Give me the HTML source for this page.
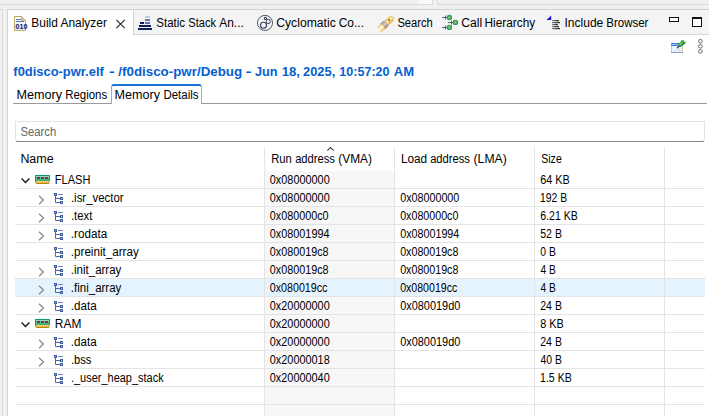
<!DOCTYPE html>
<html><head><meta charset="utf-8"><title>Build Analyzer</title>
<style>
html,body{margin:0;padding:0}
body{width:709px;height:416px;overflow:hidden;background:#f0f0f0;position:relative;font-family:"Liberation Sans",sans-serif;color:#1a1a1a}
.a{position:absolute;display:block}
.t{position:absolute;left:0;white-space:nowrap;transform-origin:0 50%;display:inline-block;color:#000}
.ttl{font-weight:bold;color:#0560d0}
.ph{color:#646464}
.gl{left:15px;width:690px;height:1px;background:#e4e4e4}
.cs{width:1px;background:#e4e4e4;top:147px;height:269px}
</style></head>
<body>
<!-- upper neighbouring panels -->
<div class="a" style="left:0;top:4px;width:433px;height:1px;background:#dadada"></div>
<div class="a" style="left:432px;top:0;width:1px;height:5px;background:#dadada"></div>
<div class="a" style="left:419px;top:0;width:13px;height:4px;background:#f9f9f9"></div>
<div class="a" style="left:437px;top:4px;width:272px;height:1px;background:#dadada"></div>
<div class="a" style="left:437px;top:0;width:1px;height:5px;background:#dadada"></div>
<!-- left neighbouring panel -->
<div class="a" style="left:0;top:9px;width:3px;height:1px;background:#dadada"></div>
<div class="a" style="left:2px;top:9px;width:1px;height:407px;background:#dadada"></div>
<!-- main view -->
<div class="a" style="left:7px;top:9px;width:702px;height:407px;background:#fff;border-left:1px solid #d2d2d2;border-top:1px solid #d2d2d2;box-sizing:border-box"></div>
<div class="a" style="left:134px;top:10px;width:575px;height:24px;background:#f4f4f4"></div>
<div class="a" style="left:133px;top:10px;width:1px;height:25px;background:#d6d6d6"></div>
<div class="a" style="left:133px;top:34px;width:576px;height:1px;background:#d6d6d6"></div>
<svg class="a" style="left:0;top:0" width="0" height="0"><defs><linearGradient id="gmb" x1="0" y1="0" x2="0" y2="1"><stop offset="0" stop-color="#7fd0a4"/><stop offset="1" stop-color="#3fae72"/></linearGradient>
<linearGradient id="gmt" x1="0" y1="0" x2="0" y2="1"><stop offset="0" stop-color="#ffffff"/><stop offset="1" stop-color="#ffd84a"/></linearGradient></defs></svg>
<!-- Build Analyzer icon -->
<svg class="a" style="left:13px;top:15px" width="16" height="17" viewBox="0 0 16 17">
<defs><linearGradient id="gdoc" x1="0" y1="0" x2="0" y2="1"><stop offset="0" stop-color="#ffffff"/><stop offset="1" stop-color="#e4ebf7"/></linearGradient></defs>
<path d="M1.5 1.5H8.5L12.5 5.5V15.5H1.5Z" fill="url(#gdoc)" stroke="#c2a868" stroke-width="1"/>
<path d="M8.5 1.5V5.5H12.5Z" fill="#e9c878" stroke="#c2a868" stroke-width="0.8"/>
<rect x="3" y="4" width="5" height="1" fill="#5a78b8"/>
<rect x="3" y="6" width="8" height="1" fill="#5a78b8"/>
<text x="2.5" y="14.1" font-family="Liberation Sans, sans-serif" font-weight="bold" font-size="7.4" fill="#0c1c58" textLength="11.9" lengthAdjust="spacingAndGlyphs">010</text>
</svg>
<!-- close X -->
<svg class="a" style="left:115px;top:19px" width="11" height="10" viewBox="0 0 11 10"><path d="M1.3 0.8L9.7 9.2M9.7 0.8L1.3 9.2" stroke="#1f1f1f" stroke-width="1.05" fill="none"/></svg>
<!-- Static Stack Analyzer icon -->
<svg class="a" style="left:137px;top:15px" width="16" height="16" viewBox="0 0 16 16">
<rect x="0" y="0.4" width="16" height="15.6" fill="#fff" opacity="0" />
<rect x="8" y="1" width="5" height="2" fill="#c3cce6"/>
<rect x="8" y="4" width="5" height="2" fill="#6379b4"/>
<rect x="4" y="4" width="1" height="2" fill="#dfe6f8"/>
<rect x="8" y="7" width="5" height="2" fill="#5a70ad"/>
<rect x="3" y="7" width="4" height="2" fill="#0d1f5c"/>
<rect x="2" y="10" width="12" height="2" fill="#0d1f5c"/>
<rect x="1" y="13" width="14" height="2" fill="#0d1f5c"/>
</svg>
<!-- Cyclomatic icon -->
<svg class="a" style="left:256px;top:14px" width="18" height="18" viewBox="0 0 18 18">
<circle cx="9" cy="8.9" r="7.55" fill="#f4f4f4" stroke="#414a66" stroke-width="0.9"/>
<circle cx="7.5" cy="11.3" r="3" fill="none" stroke="#343d5c" stroke-width="1.1"/>
<circle cx="12.2" cy="7.5" r="2.1" fill="none" stroke="#343d5c" stroke-width="1"/>
<circle cx="9.4" cy="4.4" r="1.15" fill="none" stroke="#343d5c" stroke-width="1.1"/>
</svg>
<!-- Search (flashlight) icon -->
<svg class="a" style="left:376px;top:13px" width="20" height="20" viewBox="0 0 20 20">
<defs>
<linearGradient id="gfl" x1="0" y1="0" x2="0" y2="1"><stop offset="0" stop-color="#f2b440"/><stop offset="0.4" stop-color="#ffeeb0"/><stop offset="1" stop-color="#eba732"/></linearGradient>
<linearGradient id="gfh" x1="0" y1="0" x2="0" y2="1"><stop offset="0" stop-color="#f6c24e"/><stop offset="0.5" stop-color="#fffbe8"/><stop offset="1" stop-color="#f3b63c"/></linearGradient>
<linearGradient id="gfb" x1="0" y1="0" x2="0" y2="1"><stop offset="0" stop-color="#a09488"/><stop offset="0.45" stop-color="#d2cfd8"/><stop offset="1" stop-color="#8e8072"/></linearGradient>
</defs>
<g transform="translate(10.2 10.4) rotate(-42) scale(0.88 0.95)">
<path d="M-10.6 -3.2L-3.5 -3.7V3.7L-10.6 3.2Q-11.4 0 -10.6 -3.2Z" fill="url(#gfh)"/>
<path d="M-4.6 -3.8Q-1.2 -3.6 0.4 -2.9V2.9Q-1.2 3.6 -4.6 3.8Q-3 0 -4.6 -3.8Z" fill="url(#gfb)" stroke="#9c8258" stroke-width="0.5"/>
<path d="M0.4 -2.9H7.6L10.6 -1.1V1.1L7.6 2.9H0.4Z" fill="url(#gfl)" stroke="#e5a534" stroke-width="0.5"/>
<circle cx="5" cy="-0.5" r="0.9" fill="#2446a6"/>
</g>
</svg>
<!-- Call Hierarchy icon -->
<svg class="a" style="left:440px;top:13px" width="20" height="18" viewBox="0 0 20 18">
<defs><radialGradient id="ggr" cx="0.5" cy="0.5" r="0.5"><stop offset="0" stop-color="#93d192"/><stop offset="0.5" stop-color="#52ae60"/><stop offset="1" stop-color="#2a8a42"/></radialGradient></defs>
<g stroke="#5b6280" stroke-width="1" fill="none">
<path d="M2 4.5H7M5.5 2.5V6.5"/><path d="M8 9.5H13M11.5 7.5V11.5"/><path d="M2 14.5H7M5.5 12.5V16.5"/>
</g>
<circle cx="9.4" cy="4.5" r="2.7" fill="url(#ggr)"/>
<circle cx="15.4" cy="9.4" r="2.7" fill="url(#ggr)"/>
<circle cx="9.4" cy="14.4" r="2.7" fill="url(#ggr)"/>
</svg>
<!-- Include Browser icon -->
<svg class="a" style="left:545px;top:14px" width="17" height="17" viewBox="0 0 17 17">
<defs><linearGradient id="gln" x1="0" y1="0" x2="1" y2="0"><stop offset="0" stop-color="#777"/><stop offset="0.6" stop-color="#111"/><stop offset="1" stop-color="#000"/></linearGradient></defs>
<path d="M1.6 6L6.2 6L6.2 1.6Z" fill="#1010d8"/>
<rect x="7" y="6.2" width="7" height="1" fill="url(#gln)"/>
<rect x="7" y="8.2" width="8" height="1" fill="url(#gln)"/>
<rect x="7" y="10.2" width="6" height="1" fill="url(#gln)"/>
<rect x="7" y="12.2" width="7" height="1" fill="url(#gln)"/>
<rect x="7" y="14.2" width="8" height="1" fill="url(#gln)"/>
</svg>
<!-- minimize / maximize -->
<div class="a" style="left:669px;top:17px;width:10px;height:5px;box-sizing:border-box;border:1px solid #111;background:#fdfdfd"></div>
<div class="a" style="left:692px;top:17px;width:10px;height:10px;box-sizing:border-box;border:1px solid #111;border-top-width:2px;background:#fdfdfd"></div>
<!-- pin -->
<svg class="a" style="left:670px;top:38px" width="17" height="17" viewBox="0 0 17 17">
<defs><linearGradient id="gpw" x1="0" y1="0" x2="0" y2="1"><stop offset="0" stop-color="#f4faff"/><stop offset="1" stop-color="#e2effc"/></linearGradient></defs>
<rect x="1.5" y="5.5" width="11" height="9" fill="url(#gpw)" stroke="#d9c99a" stroke-width="1"/>
<rect x="1" y="5" width="12" height="3" fill="#3c7cd4"/>
<rect x="1" y="6" width="12" height="1" fill="#9cc0ee"/>
<rect x="1" y="14" width="12" height="1" fill="#8c9cc4"/>
<path d="M7.6 10.2L10.6 13.2" stroke="#a9cdf2" stroke-width="0.9"/>
<path d="M7.1 10L9 8.1" stroke="#14286e" stroke-width="1.3"/>
<path d="M8.7 8.4L12.2 4.9" stroke="#2c9a3c" stroke-width="3.1"/>
<path d="M12 5.3L14.1 3.2" stroke="#2c9a3c" stroke-width="4.5"/>
<path d="M9.6 6.9L13.6 2.9" stroke="#6cc45c" stroke-width="1.1"/>
<path d="M10.2 6.8L11.2 5.8" stroke="#c8b078" stroke-width="1.6"/>
<path d="M10.1 8.9L12.9 6.1M13.6 6.4L15.5 4.5" stroke="#1c7a2c" stroke-width="0.8"/>
</svg>
<!-- view menu -->
<svg class="a" style="left:697px;top:38px" width="8" height="17" viewBox="0 0 8 17">
<g fill="#fff" stroke="#555" stroke-width="0.85"><circle cx="3.4" cy="3.2" r="1.85"/><circle cx="3.4" cy="8.3" r="1.85"/><circle cx="3.4" cy="13.4" r="1.85"/></g>
</svg>

<!-- inner tab folder -->
<div class="a" style="left:13px;top:103px;width:99px;height:1px;background:#9a9a9a"></div>
<div class="a" style="left:201px;top:103px;width:506px;height:1px;background:#9a9a9a"></div>
<div class="a" style="left:111px;top:84px;width:91px;height:20px;box-sizing:border-box;border:1px solid #a8a8a8;border-bottom:none;border-top:2px solid #1a73d2;border-radius:3px 3px 0 0;background:#fff"></div>
<!-- search box -->
<div class="a" style="left:15px;top:121px;width:690px;height:21px;box-sizing:border-box;border:1px solid #e3e3e3;border-bottom:1px solid #868686;border-radius:1px 1px 3px 3px;background:#fff"></div>
<!-- table -->
<div class="a" style="left:265px;top:171px;width:129px;height:245px;background:#f7f7f7"></div>
<div class="a" style="left:15px;top:279px;width:690px;height:17px;background:#e5f3ff"></div>
<div class="a gl" style="top:188px"></div>
<div class="a gl" style="top:206px"></div>
<div class="a gl" style="top:224px"></div>
<div class="a gl" style="top:242px"></div>
<div class="a gl" style="top:260px"></div>
<div class="a gl" style="top:278px"></div>
<div class="a gl" style="top:296px"></div>
<div class="a gl" style="top:314px"></div>
<div class="a gl" style="top:332px"></div>
<div class="a gl" style="top:350px"></div>
<div class="a gl" style="top:368px"></div>
<div class="a gl" style="top:386px"></div>
<div class="a gl" style="top:404px"></div>
<div class="a cs" style="left:264px"></div><div class="a cs" style="left:394px"></div><div class="a cs" style="left:534px"></div><div class="a cs" style="left:664px"></div>
<svg class="a" style="left:325px;top:146px" width="11" height="6" viewBox="0 0 11 6"><path d="M2.3 4.7L5.5 1.5L8.7 4.7" fill="none" stroke="#444" stroke-width="1.1"/></svg>
<svg class="a" style="left:20px;top:177px" width="11" height="7" viewBox="0 0 11 7"><path d="M1.6 1.5L5.5 5.4L9.4 1.5" fill="none" stroke="#1a1a1a" stroke-width="1.45"/></svg>
<svg class="a" style="left:35px;top:175px" width="15" height="10" viewBox="0 0 15 10">
<rect x="0" y="6" width="15" height="2" fill="#c9980f"/><rect x="1" y="8" width="13" height="1" fill="#a87c10"/>
<rect x="1.6" y="6" width="1.1" height="2.2" fill="url(#gmt)"/><rect x="3.6" y="6" width="1.1" height="2.2" fill="url(#gmt)"/><rect x="5.6" y="6" width="1.1" height="2.2" fill="url(#gmt)"/><rect x="7.6" y="6" width="1.1" height="2.2" fill="url(#gmt)"/><rect x="9.6" y="6" width="1.1" height="2.2" fill="url(#gmt)"/><rect x="11.6" y="6" width="1.1" height="2.2" fill="url(#gmt)"/><rect x="13.6" y="6" width="1.1" height="2.2" fill="url(#gmt)"/>
<rect x="0" y="0" width="15" height="6" fill="url(#gmb)"/><path d="M0.5 6V0.5H14.5V6" fill="none" stroke="#0f9c62" stroke-width="1"/>
<rect x="1" y="1" width="13" height="0.8" fill="#b9e8cd" opacity="0.7"/>
<rect x="2" y="2" width="3" height="2" fill="#7a3458"/><rect x="6" y="2" width="3" height="2" fill="#7a3458"/><rect x="10" y="2" width="3" height="2" fill="#7a3458"/>
</svg>
<svg class="a" style="left:38px;top:194.5px" width="7" height="10" viewBox="0 0 7 10"><path d="M1 0.8L5.4 5L1 9.2" fill="none" stroke="#8a8a8a" stroke-width="1.3"/></svg>
<svg class="a" style="left:54px;top:193px" width="10" height="12" viewBox="0 0 10 12">
<path d="M1.5 3v6.5H6M1.5 5.5H6" fill="none" stroke="#4a66a2" stroke-width="1"/>
<path d="M4 1.5H9" stroke="#6f88bd" stroke-width="1"/>
<rect x="0.5" y="0.5" width="2" height="2" fill="#9fb2d8" stroke="#44609c"/>
<rect x="6.5" y="4.5" width="2" height="2" fill="#9fb2d8" stroke="#44609c"/>
<rect x="6.5" y="8.5" width="2" height="2" fill="#9fb2d8" stroke="#44609c"/>
</svg>
<svg class="a" style="left:38px;top:212.5px" width="7" height="10" viewBox="0 0 7 10"><path d="M1 0.8L5.4 5L1 9.2" fill="none" stroke="#8a8a8a" stroke-width="1.3"/></svg>
<svg class="a" style="left:54px;top:211px" width="10" height="12" viewBox="0 0 10 12">
<path d="M1.5 3v6.5H6M1.5 5.5H6" fill="none" stroke="#4a66a2" stroke-width="1"/>
<path d="M4 1.5H9" stroke="#6f88bd" stroke-width="1"/>
<rect x="0.5" y="0.5" width="2" height="2" fill="#9fb2d8" stroke="#44609c"/>
<rect x="6.5" y="4.5" width="2" height="2" fill="#9fb2d8" stroke="#44609c"/>
<rect x="6.5" y="8.5" width="2" height="2" fill="#9fb2d8" stroke="#44609c"/>
</svg>
<svg class="a" style="left:38px;top:230.5px" width="7" height="10" viewBox="0 0 7 10"><path d="M1 0.8L5.4 5L1 9.2" fill="none" stroke="#8a8a8a" stroke-width="1.3"/></svg>
<svg class="a" style="left:54px;top:229px" width="10" height="12" viewBox="0 0 10 12">
<path d="M1.5 3v6.5H6M1.5 5.5H6" fill="none" stroke="#4a66a2" stroke-width="1"/>
<path d="M4 1.5H9" stroke="#6f88bd" stroke-width="1"/>
<rect x="0.5" y="0.5" width="2" height="2" fill="#9fb2d8" stroke="#44609c"/>
<rect x="6.5" y="4.5" width="2" height="2" fill="#9fb2d8" stroke="#44609c"/>
<rect x="6.5" y="8.5" width="2" height="2" fill="#9fb2d8" stroke="#44609c"/>
</svg>
<svg class="a" style="left:54px;top:247px" width="10" height="12" viewBox="0 0 10 12">
<path d="M1.5 3v6.5H6M1.5 5.5H6" fill="none" stroke="#4a66a2" stroke-width="1"/>
<path d="M4 1.5H9" stroke="#6f88bd" stroke-width="1"/>
<rect x="0.5" y="0.5" width="2" height="2" fill="#9fb2d8" stroke="#44609c"/>
<rect x="6.5" y="4.5" width="2" height="2" fill="#9fb2d8" stroke="#44609c"/>
<rect x="6.5" y="8.5" width="2" height="2" fill="#9fb2d8" stroke="#44609c"/>
</svg>
<svg class="a" style="left:38px;top:266.5px" width="7" height="10" viewBox="0 0 7 10"><path d="M1 0.8L5.4 5L1 9.2" fill="none" stroke="#8a8a8a" stroke-width="1.3"/></svg>
<svg class="a" style="left:54px;top:265px" width="10" height="12" viewBox="0 0 10 12">
<path d="M1.5 3v6.5H6M1.5 5.5H6" fill="none" stroke="#4a66a2" stroke-width="1"/>
<path d="M4 1.5H9" stroke="#6f88bd" stroke-width="1"/>
<rect x="0.5" y="0.5" width="2" height="2" fill="#9fb2d8" stroke="#44609c"/>
<rect x="6.5" y="4.5" width="2" height="2" fill="#9fb2d8" stroke="#44609c"/>
<rect x="6.5" y="8.5" width="2" height="2" fill="#9fb2d8" stroke="#44609c"/>
</svg>
<svg class="a" style="left:38px;top:284.5px" width="7" height="10" viewBox="0 0 7 10"><path d="M1 0.8L5.4 5L1 9.2" fill="none" stroke="#8a8a8a" stroke-width="1.3"/></svg>
<svg class="a" style="left:54px;top:283px" width="10" height="12" viewBox="0 0 10 12">
<path d="M1.5 3v6.5H6M1.5 5.5H6" fill="none" stroke="#4a66a2" stroke-width="1"/>
<path d="M4 1.5H9" stroke="#6f88bd" stroke-width="1"/>
<rect x="0.5" y="0.5" width="2" height="2" fill="#9fb2d8" stroke="#44609c"/>
<rect x="6.5" y="4.5" width="2" height="2" fill="#9fb2d8" stroke="#44609c"/>
<rect x="6.5" y="8.5" width="2" height="2" fill="#9fb2d8" stroke="#44609c"/>
</svg>
<svg class="a" style="left:38px;top:302.5px" width="7" height="10" viewBox="0 0 7 10"><path d="M1 0.8L5.4 5L1 9.2" fill="none" stroke="#8a8a8a" stroke-width="1.3"/></svg>
<svg class="a" style="left:54px;top:301px" width="10" height="12" viewBox="0 0 10 12">
<path d="M1.5 3v6.5H6M1.5 5.5H6" fill="none" stroke="#4a66a2" stroke-width="1"/>
<path d="M4 1.5H9" stroke="#6f88bd" stroke-width="1"/>
<rect x="0.5" y="0.5" width="2" height="2" fill="#9fb2d8" stroke="#44609c"/>
<rect x="6.5" y="4.5" width="2" height="2" fill="#9fb2d8" stroke="#44609c"/>
<rect x="6.5" y="8.5" width="2" height="2" fill="#9fb2d8" stroke="#44609c"/>
</svg>
<svg class="a" style="left:20px;top:321px" width="11" height="7" viewBox="0 0 11 7"><path d="M1.6 1.5L5.5 5.4L9.4 1.5" fill="none" stroke="#1a1a1a" stroke-width="1.45"/></svg>
<svg class="a" style="left:35px;top:319px" width="15" height="10" viewBox="0 0 15 10">
<rect x="0" y="6" width="15" height="2" fill="#c9980f"/><rect x="1" y="8" width="13" height="1" fill="#a87c10"/>
<rect x="1.6" y="6" width="1.1" height="2.2" fill="url(#gmt)"/><rect x="3.6" y="6" width="1.1" height="2.2" fill="url(#gmt)"/><rect x="5.6" y="6" width="1.1" height="2.2" fill="url(#gmt)"/><rect x="7.6" y="6" width="1.1" height="2.2" fill="url(#gmt)"/><rect x="9.6" y="6" width="1.1" height="2.2" fill="url(#gmt)"/><rect x="11.6" y="6" width="1.1" height="2.2" fill="url(#gmt)"/><rect x="13.6" y="6" width="1.1" height="2.2" fill="url(#gmt)"/>
<rect x="0" y="0" width="15" height="6" fill="url(#gmb)"/><path d="M0.5 6V0.5H14.5V6" fill="none" stroke="#0f9c62" stroke-width="1"/>
<rect x="1" y="1" width="13" height="0.8" fill="#b9e8cd" opacity="0.7"/>
<rect x="2" y="2" width="3" height="2" fill="#7a3458"/><rect x="6" y="2" width="3" height="2" fill="#7a3458"/><rect x="10" y="2" width="3" height="2" fill="#7a3458"/>
</svg>
<svg class="a" style="left:38px;top:338.5px" width="7" height="10" viewBox="0 0 7 10"><path d="M1 0.8L5.4 5L1 9.2" fill="none" stroke="#8a8a8a" stroke-width="1.3"/></svg>
<svg class="a" style="left:54px;top:337px" width="10" height="12" viewBox="0 0 10 12">
<path d="M1.5 3v6.5H6M1.5 5.5H6" fill="none" stroke="#4a66a2" stroke-width="1"/>
<path d="M4 1.5H9" stroke="#6f88bd" stroke-width="1"/>
<rect x="0.5" y="0.5" width="2" height="2" fill="#9fb2d8" stroke="#44609c"/>
<rect x="6.5" y="4.5" width="2" height="2" fill="#9fb2d8" stroke="#44609c"/>
<rect x="6.5" y="8.5" width="2" height="2" fill="#9fb2d8" stroke="#44609c"/>
</svg>
<svg class="a" style="left:38px;top:356.5px" width="7" height="10" viewBox="0 0 7 10"><path d="M1 0.8L5.4 5L1 9.2" fill="none" stroke="#8a8a8a" stroke-width="1.3"/></svg>
<svg class="a" style="left:54px;top:355px" width="10" height="12" viewBox="0 0 10 12">
<path d="M1.5 3v6.5H6M1.5 5.5H6" fill="none" stroke="#4a66a2" stroke-width="1"/>
<path d="M4 1.5H9" stroke="#6f88bd" stroke-width="1"/>
<rect x="0.5" y="0.5" width="2" height="2" fill="#9fb2d8" stroke="#44609c"/>
<rect x="6.5" y="4.5" width="2" height="2" fill="#9fb2d8" stroke="#44609c"/>
<rect x="6.5" y="8.5" width="2" height="2" fill="#9fb2d8" stroke="#44609c"/>
</svg>
<svg class="a" style="left:54px;top:373px" width="10" height="12" viewBox="0 0 10 12">
<path d="M1.5 3v6.5H6M1.5 5.5H6" fill="none" stroke="#4a66a2" stroke-width="1"/>
<path d="M4 1.5H9" stroke="#6f88bd" stroke-width="1"/>
<rect x="0.5" y="0.5" width="2" height="2" fill="#9fb2d8" stroke="#44609c"/>
<rect x="6.5" y="4.5" width="2" height="2" fill="#9fb2d8" stroke="#44609c"/>
<rect x="6.5" y="8.5" width="2" height="2" fill="#9fb2d8" stroke="#44609c"/>
</svg>
<span class="lb"><span class="t" style="top:17.42px;font-size:12.5px;line-height:12.5px;transform:translateX(31.30px) scaleX(0.9544);">Build Analyzer</span></span>
<span class="lb"><span class="t" style="top:17.42px;font-size:12.5px;line-height:12.5px;transform:translateX(156.25px) scaleX(0.9215);">Static</span> <span class="t" style="top:17.42px;font-size:12.5px;line-height:12.5px;transform:translateX(188.30px) scaleX(0.8837);">Stack</span> <span class="t" style="top:17.42px;font-size:12.5px;line-height:12.5px;transform:translateX(219.20px) scaleX(0.9573);">An...</span></span>
<span class="lb"><span class="t" style="top:17.42px;font-size:12.5px;line-height:12.5px;transform:translateX(276.25px) scaleX(0.9733);">Cyclomatic</span> <span class="t" style="top:17.42px;font-size:12.5px;line-height:12.5px;transform:translateX(338.70px) scaleX(0.9573);">Co...</span></span>
<span class="lb"><span class="t" style="top:17.42px;font-size:12.5px;line-height:12.5px;transform:translateX(397.40px) scaleX(0.8908);">Search</span></span>
<span class="lb"><span class="t" style="top:17.42px;font-size:12.5px;line-height:12.5px;transform:translateX(461.20px) scaleX(0.9750);">Call</span> <span class="t" style="top:17.42px;font-size:12.5px;line-height:12.5px;transform:translateX(484.60px) scaleX(0.9440);">Hierarchy</span></span>
<span class="lb"><span class="t" style="top:17.42px;font-size:12.5px;line-height:12.5px;transform:translateX(564.45px) scaleX(0.9635);">Include</span> <span class="t" style="top:17.42px;font-size:12.5px;line-height:12.5px;transform:translateX(606.30px) scaleX(0.9190);">Browser</span></span>
<span class="lb"><span class="t ttl" style="top:64.57px;font-size:13.5px;line-height:13.5px;transform:translateX(13.35px) scaleX(0.9568);">f0disco-pwr.elf</span> <span class="t ttl" style="top:64.57px;font-size:13.5px;line-height:13.5px;transform:translateX(109.00px) scaleX(1.2615);">-</span> <span class="t ttl" style="top:64.57px;font-size:13.5px;line-height:13.5px;transform:translateX(118.35px) scaleX(0.9882);">/f0disco-pwr/Debug</span> <span class="t ttl" style="top:64.57px;font-size:13.5px;line-height:13.5px;transform:translateX(245.50px) scaleX(1.3594);">-</span> <span class="t ttl" style="top:64.57px;font-size:13.5px;line-height:13.5px;transform:translateX(255.00px) scaleX(0.9395);">Jun</span> <span class="t ttl" style="top:64.57px;font-size:13.5px;line-height:13.5px;transform:translateX(281.70px) scaleX(0.9738);">18,</span> <span class="t ttl" style="top:64.57px;font-size:13.5px;line-height:13.5px;transform:translateX(303.00px) scaleX(0.9569);">2025,</span> <span class="t ttl" style="top:64.57px;font-size:13.5px;line-height:13.5px;transform:translateX(339.30px) scaleX(0.9295);">10:57:20</span> <span class="t ttl" style="top:64.57px;font-size:13.5px;line-height:13.5px;transform:translateX(393.85px) scaleX(0.9634);">AM</span></span>
<span class="lb"><span class="t" style="top:89.42px;font-size:12.5px;line-height:12.5px;transform:translateX(16.40px) scaleX(1.0087);">Memory</span> <span class="t" style="top:89.42px;font-size:12.5px;line-height:12.5px;transform:translateX(65.20px) scaleX(0.9148);">Regions</span></span>
<span class="lb"><span class="t" style="top:89.42px;font-size:12.5px;line-height:12.5px;transform:translateX(114.60px) scaleX(1.0071);">Memory</span> <span class="t" style="top:89.42px;font-size:12.5px;line-height:12.5px;transform:translateX(163.45px) scaleX(0.9164);">Details</span></span>
<span class="lb"><span class="t ph" style="top:126.42px;font-size:12.5px;line-height:12.5px;transform:translateX(20.40px) scaleX(0.9066);">Search</span></span>
<span class="lb"><span class="t" style="top:153.42px;font-size:12.5px;line-height:12.5px;transform:translateX(20.40px) scaleX(0.9940);">Name</span></span>
<span class="lb"><span class="t" style="top:153.42px;font-size:12.5px;line-height:12.5px;transform:translateX(271.20px) scaleX(0.9000);">Run</span> <span class="t" style="top:153.42px;font-size:12.5px;line-height:12.5px;transform:translateX(295.15px) scaleX(0.8920);">address</span> <span class="t" style="top:153.42px;font-size:12.5px;line-height:12.5px;transform:translateX(338.35px) scaleX(0.9502);">(VMA)</span></span>
<span class="lb"><span class="t" style="top:153.42px;font-size:12.5px;line-height:12.5px;transform:translateX(401.00px) scaleX(0.9383);">Load</span> <span class="t" style="top:153.42px;font-size:12.5px;line-height:12.5px;transform:translateX(430.15px) scaleX(0.8943);">address</span> <span class="t" style="top:153.42px;font-size:12.5px;line-height:12.5px;transform:translateX(473.55px) scaleX(0.9754);">(LMA)</span></span>
<span class="lb"><span class="t" style="top:153.42px;font-size:12.5px;line-height:12.5px;transform:translateX(541.20px) scaleX(0.8459);">Size</span></span>
<span class="lb"><span class="t" style="top:174.42px;font-size:12.5px;line-height:12.5px;transform:translateX(54.80px) scaleX(0.8830);">FLASH</span></span>
<span class="lb"><span class="t" style="top:174.42px;font-size:12.5px;line-height:12.5px;transform:translateX(269.80px) scaleX(0.8705);">0x08000000</span></span>
<span class="lb"><span class="t" style="top:174.42px;font-size:12.5px;line-height:12.5px;transform:translateX(540.25px) scaleX(0.8695);">64 KB</span></span>
<span class="lb"><span class="t" style="top:192.42px;font-size:12.5px;line-height:12.5px;transform:translateX(70.95px) scaleX(0.9133);">.isr_vector</span></span>
<span class="lb"><span class="t" style="top:192.42px;font-size:12.5px;line-height:12.5px;transform:translateX(269.80px) scaleX(0.8705);">0x08000000</span></span>
<span class="lb"><span class="t" style="top:192.42px;font-size:12.5px;line-height:12.5px;transform:translateX(400.15px) scaleX(0.8596);">0x08000000</span></span>
<span class="lb"><span class="t" style="top:192.42px;font-size:12.5px;line-height:12.5px;transform:translateX(540.00px) scaleX(0.8325);">192 B</span></span>
<span class="lb"><span class="t" style="top:210.42px;font-size:12.5px;line-height:12.5px;transform:translateX(70.95px) scaleX(0.9067);">.text</span></span>
<span class="lb"><span class="t" style="top:210.42px;font-size:12.5px;line-height:12.5px;transform:translateX(269.80px) scaleX(0.8628);">0x080000c0</span></span>
<span class="lb"><span class="t" style="top:210.42px;font-size:12.5px;line-height:12.5px;transform:translateX(400.15px) scaleX(0.8554);">0x080000c0</span></span>
<span class="lb"><span class="t" style="top:210.42px;font-size:12.5px;line-height:12.5px;transform:translateX(540.25px) scaleX(0.8423);">6.21 KB</span></span>
<span class="lb"><span class="t" style="top:228.42px;font-size:12.5px;line-height:12.5px;transform:translateX(70.85px) scaleX(0.9344);">.rodata</span></span>
<span class="lb"><span class="t" style="top:228.42px;font-size:12.5px;line-height:12.5px;transform:translateX(269.80px) scaleX(0.8669);">0x08001994</span></span>
<span class="lb"><span class="t" style="top:228.42px;font-size:12.5px;line-height:12.5px;transform:translateX(400.15px) scaleX(0.8596);">0x08001994</span></span>
<span class="lb"><span class="t" style="top:228.42px;font-size:12.5px;line-height:12.5px;transform:translateX(540.25px) scaleX(0.8427);">52 B</span></span>
<span class="lb"><span class="t" style="top:246.42px;font-size:12.5px;line-height:12.5px;transform:translateX(70.80px) scaleX(0.9314);">.preinit_array</span></span>
<span class="lb"><span class="t" style="top:246.42px;font-size:12.5px;line-height:12.5px;transform:translateX(269.80px) scaleX(0.8628);">0x080019c8</span></span>
<span class="lb"><span class="t" style="top:246.42px;font-size:12.5px;line-height:12.5px;transform:translateX(400.15px) scaleX(0.8554);">0x080019c8</span></span>
<span class="lb"><span class="t" style="top:246.42px;font-size:12.5px;line-height:12.5px;transform:translateX(540.25px) scaleX(0.8286);">0 B</span></span>
<span class="lb"><span class="t" style="top:264.42px;font-size:12.5px;line-height:12.5px;transform:translateX(70.85px) scaleX(0.9196);">.init_array</span></span>
<span class="lb"><span class="t" style="top:264.42px;font-size:12.5px;line-height:12.5px;transform:translateX(269.80px) scaleX(0.8628);">0x080019c8</span></span>
<span class="lb"><span class="t" style="top:264.42px;font-size:12.5px;line-height:12.5px;transform:translateX(400.15px) scaleX(0.8554);">0x080019c8</span></span>
<span class="lb"><span class="t" style="top:264.42px;font-size:12.5px;line-height:12.5px;transform:translateX(540.50px) scaleX(0.8156);">4 B</span></span>
<span class="lb"><span class="t" style="top:282.42px;font-size:12.5px;line-height:12.5px;transform:translateX(70.85px) scaleX(0.9196);">.fini_array</span></span>
<span class="lb"><span class="t" style="top:282.42px;font-size:12.5px;line-height:12.5px;transform:translateX(269.80px) scaleX(0.8550);">0x080019cc</span></span>
<span class="lb"><span class="t" style="top:282.42px;font-size:12.5px;line-height:12.5px;transform:translateX(400.15px) scaleX(0.8475);">0x080019cc</span></span>
<span class="lb"><span class="t" style="top:282.42px;font-size:12.5px;line-height:12.5px;transform:translateX(540.50px) scaleX(0.8156);">4 B</span></span>
<span class="lb"><span class="t" style="top:300.42px;font-size:12.5px;line-height:12.5px;transform:translateX(70.85px) scaleX(0.9300);">.data</span></span>
<span class="lb"><span class="t" style="top:300.42px;font-size:12.5px;line-height:12.5px;transform:translateX(269.80px) scaleX(0.8705);">0x20000000</span></span>
<span class="lb"><span class="t" style="top:300.42px;font-size:12.5px;line-height:12.5px;transform:translateX(400.15px) scaleX(0.8743);">0x080019d0</span></span>
<span class="lb"><span class="t" style="top:300.42px;font-size:12.5px;line-height:12.5px;transform:translateX(540.25px) scaleX(0.8427);">24 B</span></span>
<span class="lb"><span class="t" style="top:318.42px;font-size:12.5px;line-height:12.5px;transform:translateX(54.80px) scaleX(0.9561);">RAM</span></span>
<span class="lb"><span class="t" style="top:318.42px;font-size:12.5px;line-height:12.5px;transform:translateX(269.80px) scaleX(0.8705);">0x20000000</span></span>
<span class="lb"><span class="t" style="top:318.42px;font-size:12.5px;line-height:12.5px;transform:translateX(540.25px) scaleX(0.8710);">8 KB</span></span>
<span class="lb"><span class="t" style="top:336.42px;font-size:12.5px;line-height:12.5px;transform:translateX(70.85px) scaleX(0.9300);">.data</span></span>
<span class="lb"><span class="t" style="top:336.42px;font-size:12.5px;line-height:12.5px;transform:translateX(269.80px) scaleX(0.8705);">0x20000000</span></span>
<span class="lb"><span class="t" style="top:336.42px;font-size:12.5px;line-height:12.5px;transform:translateX(400.15px) scaleX(0.8743);">0x080019d0</span></span>
<span class="lb"><span class="t" style="top:336.42px;font-size:12.5px;line-height:12.5px;transform:translateX(540.25px) scaleX(0.8427);">24 B</span></span>
<span class="lb"><span class="t" style="top:354.42px;font-size:12.5px;line-height:12.5px;transform:translateX(70.95px) scaleX(0.8930);">.bss</span></span>
<span class="lb"><span class="t" style="top:354.42px;font-size:12.5px;line-height:12.5px;transform:translateX(269.80px) scaleX(0.8705);">0x20000018</span></span>
<span class="lb"><span class="t" style="top:354.42px;font-size:12.5px;line-height:12.5px;transform:translateX(540.50px) scaleX(0.8333);">40 B</span></span>
<span class="lb"><span class="t" style="top:372.42px;font-size:12.5px;line-height:12.5px;transform:translateX(70.95px) scaleX(0.8780);">._user_heap_stack</span></span>
<span class="lb"><span class="t" style="top:372.42px;font-size:12.5px;line-height:12.5px;transform:translateX(269.80px) scaleX(0.8705);">0x20000040</span></span>
<span class="lb"><span class="t" style="top:372.42px;font-size:12.5px;line-height:12.5px;transform:translateX(540.05px) scaleX(0.8442);">1.5 KB</span></span>
</body></html>
